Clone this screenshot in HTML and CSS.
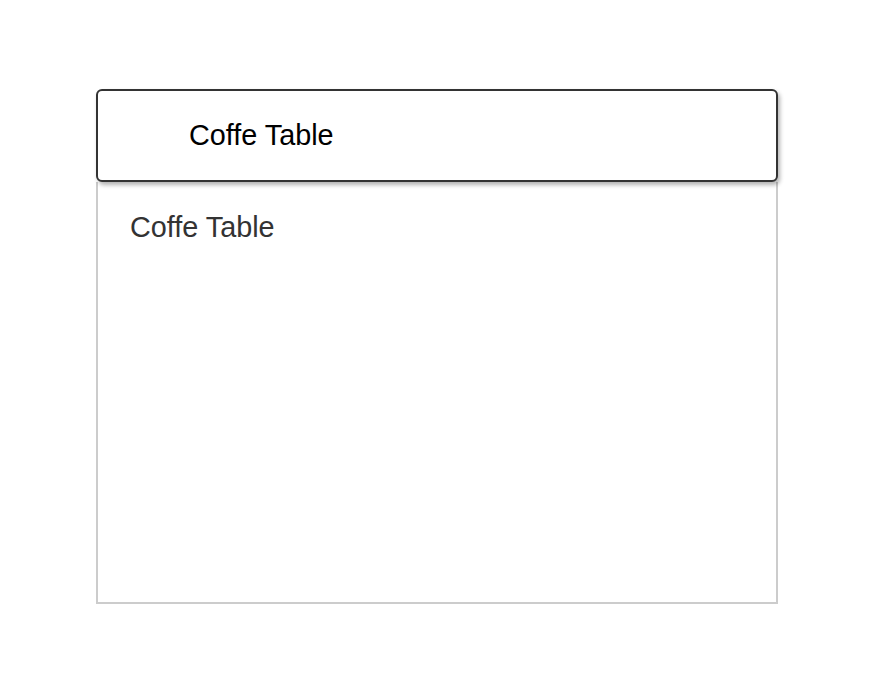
FILE: index.html
```html
<!DOCTYPE html>
<html lang="en">
<head>
  <meta charset="UTF-8" />
  <title>Coffe Table</title>
  <link rel="stylesheet" href="styles.css">
</head>
<body>
  <div class="panel">
    <div class="panel-header">Coffe Table</div>
    <div class="panel-body">
      <div class="item-title">Coffe Table</div>
    </div>
  </div>
</body>
</html>
```

FILE: styles.css
```css
* {
  box-sizing: border-box;
}

html, body {
  margin: 0;
  padding: 0;
  background: #fff;
  font-family: 'Liberation Sans', Arial, sans-serif;
}

.panel {
  width: 682px;
  margin: 89px 0 0 96px;
}

.panel-header {
  height: 93px;
  display: flex;
  align-items: center;
  padding-left: 91px;
  border: 2px solid #333;
  border-radius: 6px;
  background: #fff;
  box-shadow: 2px 3px 4px rgba(0, 0, 0, 0.3);
  font-size: 28.8px;
  color: #000;
  position: relative;
}

.panel-body {
  height: 422px;
  border: 2px solid #ccc;
  border-top: none;
  padding: 29px 32px;
}

.item-title {
  font-size: 28.8px;
  line-height: 32px;
  color: #333;
}
```
